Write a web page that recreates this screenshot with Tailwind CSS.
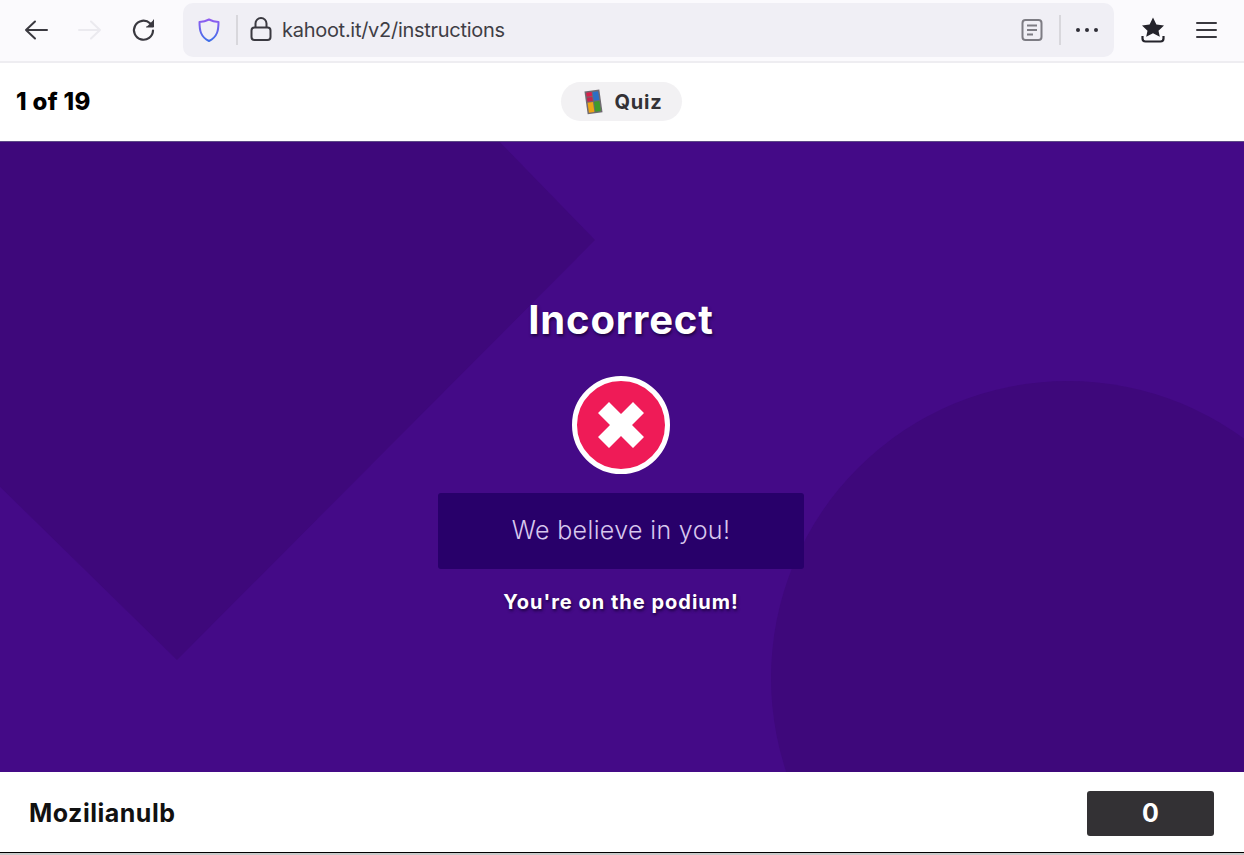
<!DOCTYPE html>
<html>
<head>
<meta charset="utf-8">
<script src="https://cdn.jsdelivr.net/npm/@tailwindcss/browser@4"></script>
</head>
<body class="m-0 w-[1244px] h-[855px] overflow-hidden bg-[#c9c9c9] font-['Inter',sans-serif]">
<div class="h-[852px] flex flex-col bg-white">
  <!-- browser toolbar -->
  <div class="h-[63px] shrink-0 bg-[#fbfafd] border-b-2 border-[#eeedf1] flex items-center pb-[2px]">
    <div class="w-[183px] flex items-center shrink-0">
      <svg class="ml-[24px]" width="25" height="24" viewBox="0 0 25 24" fill="none" stroke="#3a3940" stroke-width="2" stroke-linecap="round" stroke-linejoin="round"><path d="M23 12H2M11 3.500 2 12l9 8.500"/></svg>
      <svg class="ml-[28px]" width="25" height="24" viewBox="0 0 25 24" fill="none" stroke="#ebeaef" stroke-width="2" stroke-linecap="round" stroke-linejoin="round"><path d="M2 12h21M14 3.500l9 8.500-9 8.500"/></svg>
      <svg class="ml-[29px]" width="26" height="26" viewBox="0 0 26 26" fill="none" stroke="#3a3940" stroke-width="2.200" stroke-linecap="round" stroke-linejoin="round"><path d="M22 13.500a9.500 9.500 0 1 1-3-7.200l3 2.700"/><path d="M22.500 3v7h-7" fill="#3a3940" stroke-width="1"/></svg>
    </div>
    <div class="w-[931px] h-[54px] shrink-0 rounded-[10px] bg-[#f0eff5] flex items-center">
      <svg class="ml-[14px]" width="24" height="26" viewBox="0 0 24 26" fill="none" stroke-width="2" stroke-linejoin="round"><defs><linearGradient id="sh" x1="0" y1="0" x2="0" y2="1"><stop offset="0" stop-color="#8f5cf0"/><stop offset="1" stop-color="#3f6fe8"/></linearGradient></defs><path d="M12 2.500c3 1.600 6 2.300 9.500 2.500 0 8-1 15-9.500 19C3.500 20 2.500 13 2.500 5 6 4.800 9 4.100 12 2.500Z" stroke="url(#sh)"/></svg>
      <div class="w-[2px] h-[30px] bg-[#d8d7dc] ml-[15px]"></div>
      <svg class="ml-[12px] mb-[2px]" width="22" height="26" viewBox="0 0 22 26" fill="none" stroke="#3a3940" stroke-width="2" stroke-linejoin="round"><rect x="1.500" y="11.500" width="19" height="12.500" rx="3"/><path d="M5.500 11.500V7.500a5.500 5.500 0 0 1 11 0v4"/></svg>
      <span class="ml-[10px] mt-[1px] text-[20px] leading-none text-[#3f3e45] tracking-[-0.28px]">kahoot.it/v2/instructions</span>
      <svg class="ml-auto" width="22" height="24" viewBox="0 0 22 24" fill="none" stroke="#7d7c83" stroke-width="2"><rect x="1.500" y="2" width="19" height="20" rx="3"/><path d="M6 7.500h10M6 12h10M6 16.500h6"/></svg>
      <div class="w-[2px] h-[30px] bg-[#d8d7dc] ml-[16px]"></div>
      <div class="flex gap-[5px] ml-[15px] mr-[16px]">
        <span class="w-[4px] h-[4px] rounded-full bg-[#2f2e36]"></span>
        <span class="w-[4px] h-[4px] rounded-full bg-[#2f2e36]"></span>
        <span class="w-[4px] h-[4px] rounded-full bg-[#2f2e36]"></span>
      </div>
    </div>
    <svg class="ml-[26px]" width="26" height="28" viewBox="0 0 26 28" fill="none"><path d="M13 1.500l3.400 6.900 7.600 1.100-5.500 5.300 1.300 6-6.800-3.500-6.800 3.500 1.300-6L2 9.500l7.600-1.100Z" fill="#24232b"/><path d="M2.500 20v2.500a3 3 0 0 0 3 3h15a3 3 0 0 0 3-3V20" stroke="#24232b" stroke-width="2.200"/></svg>
    <div class="ml-[30px] w-[21px] flex flex-col gap-[5px]">
      <span class="h-[2px] bg-[#38373e] rounded"></span>
      <span class="h-[2px] bg-[#38373e] rounded"></span>
      <span class="h-[2px] bg-[#38373e] rounded"></span>
    </div>
  </div>

  <!-- quiz header -->
  <div class="h-[78px] shrink-0 relative flex items-center justify-center bg-white pr-[2px]">
    <span class="absolute left-[16px] top-[25px] text-[24px] leading-[28px] font-extrabold text-black tracking-[0.35px]">1 of 19</span>
    <div class="w-[121px] h-[39px] mt-[-1px] rounded-full bg-[#f2f1f3] flex items-center">
      <svg class="ml-[22px]" width="20" height="26" viewBox="0 0 20 26"><g transform="rotate(-8 10 13)"><rect x="3" y="1.500" width="15" height="23" fill="#6f6a70"/><rect x="4.500" y="3" width="5.500" height="4" fill="#d8224c"/><rect x="4.500" y="8" width="5.500" height="4" fill="#c2254f"/><rect x="11" y="3" width="5.500" height="9" fill="#2c6fc4"/><rect x="4.500" y="13" width="5.500" height="10" fill="#eda515"/><rect x="11" y="13" width="5.500" height="10" fill="#3f9a2c"/></g></svg>
      <span class="ml-[12px] text-[20px] leading-none font-bold text-[#333135] tracking-[0.8px]">Quiz</span>
    </div>
  </div>

  <!-- game area -->
  <main class="h-[631px] shrink-0 relative overflow-hidden bg-[#440a87] flex flex-col items-center pr-[2px]">
    <svg class="absolute inset-0" width="1244" height="631" viewBox="0 0 1244 631" fill="none">
      <path d="M-10 -10H489L595 99 177 519-10 336Z" fill="#3e087b"/>
      <circle cx="1068" cy="537" r="297" fill="#3e087b"/>
    </svg>
    <div class="absolute inset-x-0 top-0 h-px bg-[#5c4a85]"></div>
    <h1 class="relative mt-[155px] text-[40px] leading-[48px] font-bold text-white tracking-[0.8px] [text-shadow:1px_2px_3px_rgba(20,0,50,0.8)]">Incorrect</h1>
    <div class="relative mt-[32px] w-[98px] h-[98px] rounded-full border-[5px] border-white bg-[#ef1b57] flex items-center justify-center">
      <svg width="48" height="48" viewBox="0 0 48 48"><path d="M12 1 24 13 36 1l11 11-12 12 12 12-11 11-12-12-12 12L1 36l12-12L1 12Z" fill="#fff"/></svg>
    </div>
    <div class="relative mt-[19px] w-[366px] h-[76px] rounded-[3px] bg-[#28006a] flex items-center justify-center">
      <span class="mb-[2px] text-[25px] leading-none font-light text-[#d8c8ee] tracking-[0.36px]">We believe in you!</span>
    </div>
    <p class="relative mt-[21px] text-[20px] leading-[24px] font-bold text-white tracking-[1px] [text-shadow:1px_2px_3px_rgba(20,0,50,0.8)]">You're on the podium!</p>
  </main>

  <!-- footer -->
  <div class="h-[80px] shrink-0 flex items-center justify-between bg-white pl-[29px] pr-[30px]">
    <span class="text-[25px] leading-none font-bold text-[#111] tracking-[0.5px] mt-[2px]">Mozilianulb</span>
    <div class="w-[127px] h-[45px] mt-[3px] rounded-[3px] bg-[#333134] flex items-center justify-center">
      <span class="text-[25px] leading-none font-bold text-white">0</span>
    </div>
  </div>
</div>
<div class="h-[1px] bg-black"></div>
</body>
</html>
